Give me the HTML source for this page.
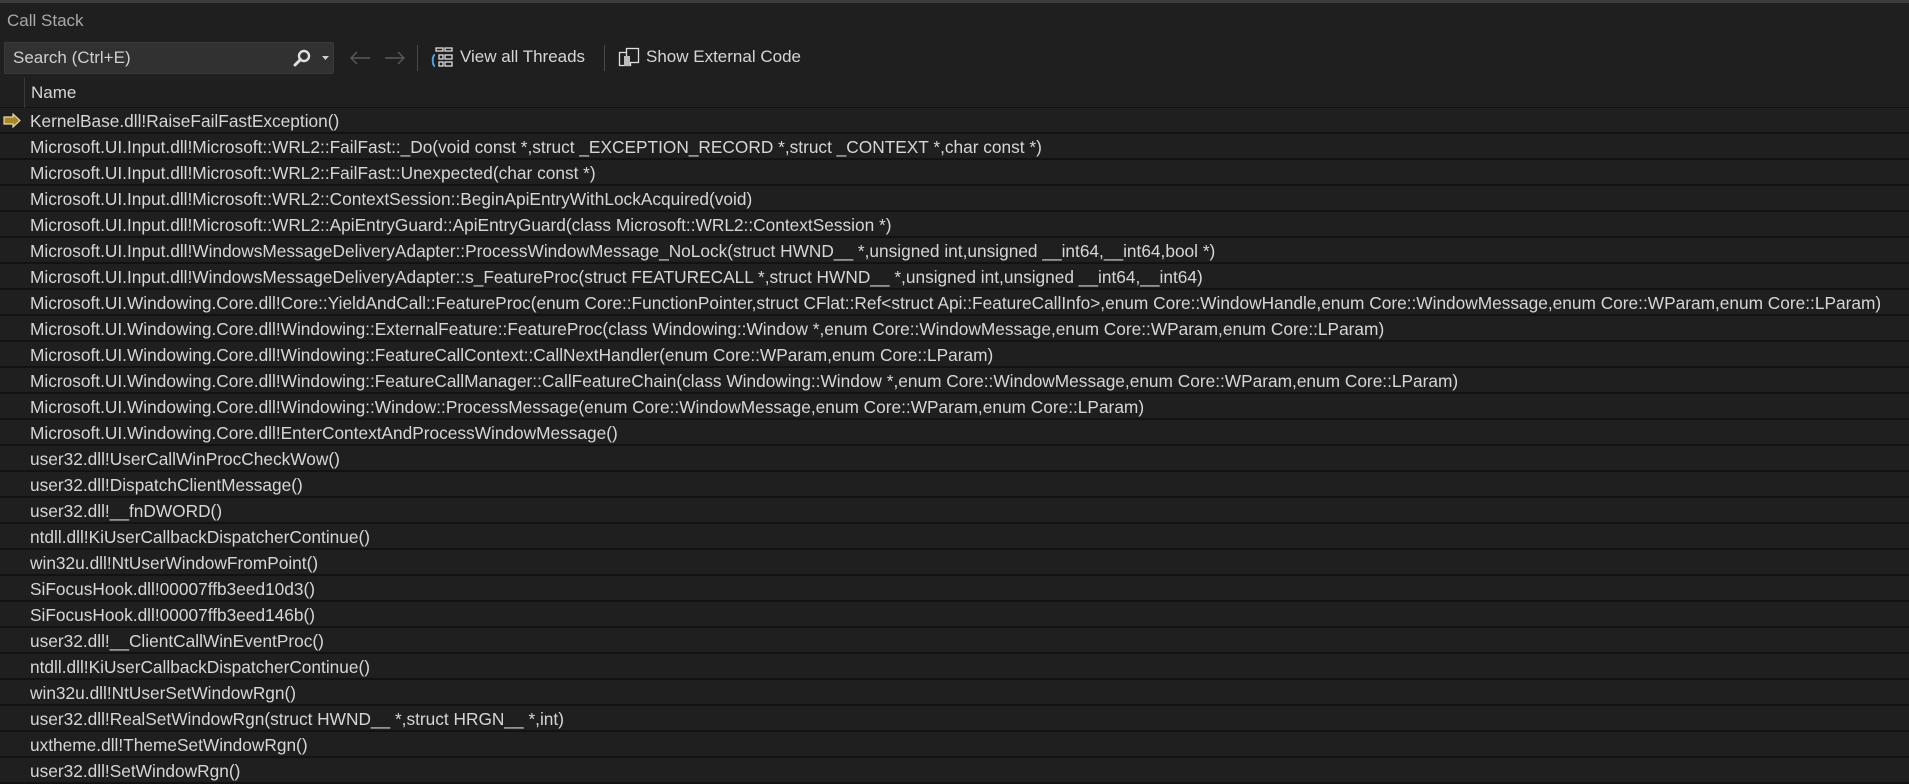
<!DOCTYPE html>
<html><head><meta charset="utf-8"><style>
*{margin:0;padding:0;box-sizing:border-box}
body{width:1909px;height:784px;background:#1f1f1f;overflow:hidden;font-family:"Liberation Sans",sans-serif;color:#d6d6d6;font-size:17.3px;position:relative}
.abs{position:absolute}
.topline{left:0;top:0;width:1909px;height:3px;background:#3c3c3c}
.title{left:7px;top:11px;color:#a8a8a8;font-size:17px}
.search{left:4px;top:42px;width:330px;height:32px;background:#313131;border:1px solid #3a3a3a;border-radius:2px}
.search span{position:absolute;left:8px;top:5px;color:#cfcfcf;font-size:17px}
.sep{width:1px;height:26px;top:45px;background:#4a4a4a}
.tb{top:47px;color:#d6d6d6;font-size:17px}
.hdr{left:0;top:78px;width:1909px;height:30px;border-bottom:1px solid #121212}
.vline{left:24px;top:78px;width:1px;height:30px;background:#3a3a3a}
.row{position:absolute;left:0;width:1909px;height:26px;border-bottom:2px solid #121212;white-space:nowrap}
.row span{position:absolute;left:30px;top:3px}
</style></head><body>
<div class="abs topline"></div>
<div class="abs title">Call Stack</div>
<div class="abs search"><span>Search (Ctrl+E)</span>
<svg class="abs" style="left:288px;top:6px" width="18" height="18" viewBox="0 0 18 18"><circle cx="11" cy="7" r="5" fill="none" stroke="#e0e0e0" stroke-width="2.4"/><path d="M7.5 10.5 L2 16" stroke="#e0e0e0" stroke-width="3" stroke-linecap="round"/></svg>
<svg class="abs" style="left:317px;top:13px" width="8" height="5"><path d="M0 0h7L3.5 4z" fill="#cfcfcf"/></svg>
</div>
<svg class="abs" style="left:349px;top:50px" width="22" height="16"><path d="M21 8H2M8 2L2 8l6 6" stroke="#5a5a5a" stroke-width="1.4" fill="none"/></svg>
<svg class="abs" style="left:384px;top:50px" width="22" height="16"><path d="M1 8h19M14 2l6 6-6 6" stroke="#5a5a5a" stroke-width="1.4" fill="none"/></svg>
<div class="abs sep" style="left:417px"></div>
<svg class="abs" style="left:431px;top:47px" width="23" height="22" viewBox="0 0 23 22"><rect x="5" y="1" width="7" height="3" fill="none" stroke="#ddd" stroke-width="1.3"/><rect x="14" y="1" width="7" height="3" fill="none" stroke="#ddd" stroke-width="1.3"/><rect x="8" y="8" width="4" height="4" fill="none" stroke="#ddd" stroke-width="1.3"/><rect x="14" y="8" width="7" height="4" fill="none" stroke="#ddd" stroke-width="1.3"/><rect x="8" y="15" width="4" height="4" fill="none" stroke="#ddd" stroke-width="1.3"/><rect x="14" y="15" width="7" height="4" fill="none" stroke="#ddd" stroke-width="1.3"/><path d="M4 8C1 8 1 19 4 19" stroke="#4aa3e8" stroke-width="2" fill="none"/></svg>
<div class="abs tb" style="left:460px">View all Threads</div>
<div class="abs sep" style="left:604px"></div>
<svg class="abs" style="left:618px;top:47px" width="23" height="22" viewBox="0 0 23 22"><rect x="1.5" y="5.5" width="11" height="13" fill="none" stroke="#ddd" stroke-width="1.3"/><rect x="8.5" y="1.5" width="12" height="14" fill="#1f1f1f" stroke="#ddd" stroke-width="1.3"/><rect x="6" y="9" width="6" height="10" fill="#bbb"/></svg>
<div class="abs tb" style="left:646px">Show External Code</div>
<div class="abs hdr"></div>
<div class="abs vline"></div>
<div class="abs" style="left:31px;top:83px;font-size:17px">Name</div>
<div class="row" style="top:108px"><svg class="abs" style="left:3px;top:5px" width="19" height="15" viewBox="0 0 19 15"><path d="M1 4h9V1l7 6.5-7 6.5v-3H1z" fill="#a8862a" stroke="#e9d9a6" stroke-width="1.2"/></svg><span>KernelBase.dll!RaiseFailFastException()</span></div>
<div class="row" style="top:134px"><span>Microsoft.UI.Input.dll!Microsoft::WRL2::FailFast::_Do(void const *,struct _EXCEPTION_RECORD *,struct _CONTEXT *,char const *)</span></div>
<div class="row" style="top:160px"><span>Microsoft.UI.Input.dll!Microsoft::WRL2::FailFast::Unexpected(char const *)</span></div>
<div class="row" style="top:186px"><span>Microsoft.UI.Input.dll!Microsoft::WRL2::ContextSession::BeginApiEntryWithLockAcquired(void)</span></div>
<div class="row" style="top:212px"><span>Microsoft.UI.Input.dll!Microsoft::WRL2::ApiEntryGuard::ApiEntryGuard(class Microsoft::WRL2::ContextSession *)</span></div>
<div class="row" style="top:238px"><span>Microsoft.UI.Input.dll!WindowsMessageDeliveryAdapter::ProcessWindowMessage_NoLock(struct HWND__ *,unsigned int,unsigned __int64,__int64,bool *)</span></div>
<div class="row" style="top:264px"><span>Microsoft.UI.Input.dll!WindowsMessageDeliveryAdapter::s_FeatureProc(struct FEATURECALL *,struct HWND__ *,unsigned int,unsigned __int64,__int64)</span></div>
<div class="row" style="top:290px"><span>Microsoft.UI.Windowing.Core.dll!Core::YieldAndCall::FeatureProc(enum Core::FunctionPointer,struct CFlat::Ref&lt;struct Api::FeatureCallInfo&gt;,enum Core::WindowHandle,enum Core::WindowMessage,enum Core::WParam,enum Core::LParam)</span></div>
<div class="row" style="top:316px"><span>Microsoft.UI.Windowing.Core.dll!Windowing::ExternalFeature::FeatureProc(class Windowing::Window *,enum Core::WindowMessage,enum Core::WParam,enum Core::LParam)</span></div>
<div class="row" style="top:342px"><span>Microsoft.UI.Windowing.Core.dll!Windowing::FeatureCallContext::CallNextHandler(enum Core::WParam,enum Core::LParam)</span></div>
<div class="row" style="top:368px"><span>Microsoft.UI.Windowing.Core.dll!Windowing::FeatureCallManager::CallFeatureChain(class Windowing::Window *,enum Core::WindowMessage,enum Core::WParam,enum Core::LParam)</span></div>
<div class="row" style="top:394px"><span>Microsoft.UI.Windowing.Core.dll!Windowing::Window::ProcessMessage(enum Core::WindowMessage,enum Core::WParam,enum Core::LParam)</span></div>
<div class="row" style="top:420px"><span>Microsoft.UI.Windowing.Core.dll!EnterContextAndProcessWindowMessage()</span></div>
<div class="row" style="top:446px"><span>user32.dll!UserCallWinProcCheckWow()</span></div>
<div class="row" style="top:472px"><span>user32.dll!DispatchClientMessage()</span></div>
<div class="row" style="top:498px"><span>user32.dll!__fnDWORD()</span></div>
<div class="row" style="top:524px"><span>ntdll.dll!KiUserCallbackDispatcherContinue()</span></div>
<div class="row" style="top:550px"><span>win32u.dll!NtUserWindowFromPoint()</span></div>
<div class="row" style="top:576px"><span>SiFocusHook.dll!00007ffb3eed10d3()</span></div>
<div class="row" style="top:602px"><span>SiFocusHook.dll!00007ffb3eed146b()</span></div>
<div class="row" style="top:628px"><span>user32.dll!__ClientCallWinEventProc()</span></div>
<div class="row" style="top:654px"><span>ntdll.dll!KiUserCallbackDispatcherContinue()</span></div>
<div class="row" style="top:680px"><span>win32u.dll!NtUserSetWindowRgn()</span></div>
<div class="row" style="top:706px"><span>user32.dll!RealSetWindowRgn(struct HWND__ *,struct HRGN__ *,int)</span></div>
<div class="row" style="top:732px"><span>uxtheme.dll!ThemeSetWindowRgn()</span></div>
<div class="row" style="top:758px"><span>user32.dll!SetWindowRgn()</span></div>
</body></html>
